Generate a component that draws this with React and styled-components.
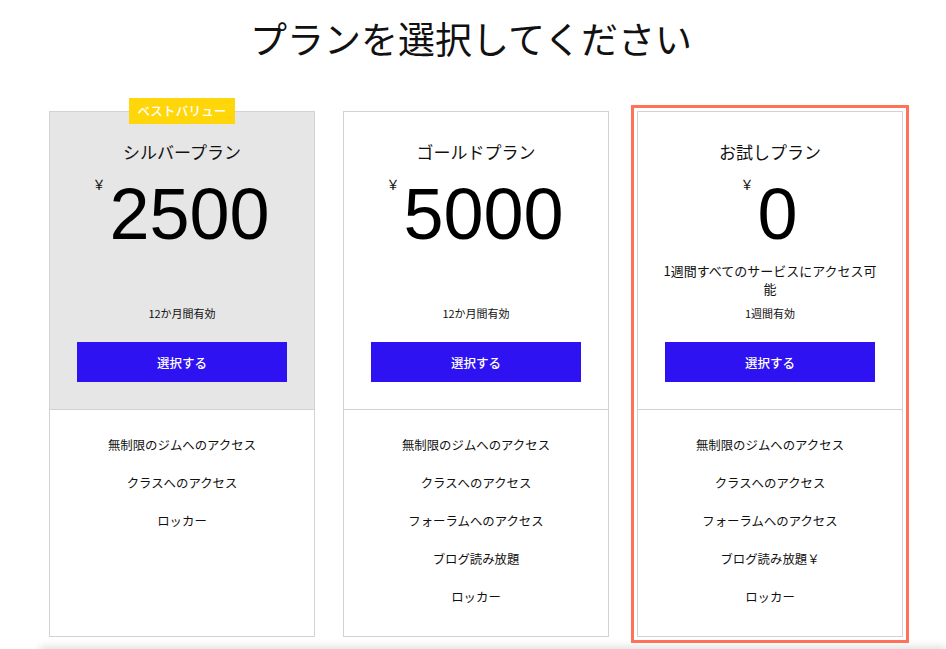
import React from "react";
import styled, { createGlobalStyle } from "styled-components";

const GlobalStyle = createGlobalStyle`
  html, body { margin: 0; padding: 0; background: #ffffff; }
  body {
    font-family: "Noto Sans CJK JP", "Noto Sans", sans-serif;
    color: #111111;
    overflow: hidden;
  }
`;

const Page = styled.div`
  width: 946px;
  height: 649px;
  overflow: hidden;
  display: flex;
  flex-direction: column;
  & > * { flex-shrink: 0; }
`;

const Title = styled.h1`
  margin: 16px 0 0;
  font-size: 37px;
  line-height: 44px;
  font-weight: 400;
  text-align: center;
  color: #111111;
  padding-right: 4px;
`;

const Cards = styled.div`
  display: flex;
  gap: 28px;
  padding: 0 43px 0 49px;
  margin-top: 51px;
  align-items: stretch;
`;

const Card = styled.div`
  position: relative;
  width: 266px;
  box-sizing: border-box;
  border: 1px solid #d2d2d2;
  display: flex;
  flex-direction: column;
  background: #ffffff;
  outline: ${(p) => (p.$selected ? "3px solid #ff7158" : "none")};
  outline-offset: 3px;
`;

const Badge = styled.div`
  position: absolute;
  top: -14px;
  left: 50%;
  transform: translateX(-50%);
  width: 106px;
  height: 26px;
  background: #ffd60a;
  color: #ffffff;
  font-size: 12.5px;
  line-height: 26px;
  text-align: center;
  font-weight: 500;
  letter-spacing: 0.2px;
`;

const Header = styled.div`
  height: 298px;
  box-sizing: border-box;
  padding: 28px 10px 27px;
  display: flex;
  flex-direction: column;
  align-items: center;
  background: ${(p) => (p.$shaded ? "#e6e6e6" : "#ffffff")};
  border-bottom: 1px solid #d2d2d2;
`;

const PlanName = styled.div`
  font-size: 17px;
  line-height: 24px;
  color: #111111;
`;

const Price = styled.div`
  margin-top: 14px;
  display: flex;
  align-items: flex-start;
  gap: 4px;
  padding-right: 2px;
`;

const Yen = styled.span`
  font-family: "Noto Sans CJK JP", sans-serif;
  font-size: 13px;
  line-height: 13px;
  margin-top: -1px;
`;

const Amount = styled.span`
  font-family: "Liberation Sans", Arial, sans-serif;
  font-size: 72px;
  line-height: 72px;
  color: #000000;
`;

const DescArea = styled.div`
  flex: 1;
  width: 221px;
  display: flex;
  flex-direction: column;
  justify-content: flex-end;
  padding-bottom: 6px;
`;

const Desc = styled.div`
  font-size: 13px;
  line-height: 18px;
  text-align: center;
  color: #111111;
`;

const Validity = styled.div`
  font-size: 11px;
  line-height: 18px;
  color: #111111;
`;

const SelectButton = styled.button`
  margin-top: 20px;
  width: 210px;
  height: 40px;
  border: none;
  background: #2e12f2;
  color: #ffffff;
  font-family: "Noto Sans CJK JP", sans-serif;
  font-size: 12.5px;
  font-weight: 500;
  cursor: pointer;
`;

const Features = styled.ul`
  list-style: none;
  margin: 0;
  padding: 26px 0 30px;
  display: flex;
  flex-direction: column;
  gap: 20px;
  flex: 1;
`;

const Feature = styled.li`
  font-size: 12.4px;
  line-height: 18px;
  text-align: center;
  color: #111111;
`;

const Footer = styled.div`
  margin-top: 13px;
  margin-left: 40px;
  height: 40px;
  background: #ffffff;
  box-shadow: 0 -3px 8px rgba(0, 0, 0, 0.14);
`;

const plans = [
  {
    name: "シルバープラン",
    price: "2500",
    validity: "12か月間有効",
    shaded: true,
    badge: "ベストバリュー",
    features: ["無制限のジムへのアクセス", "クラスへのアクセス", "ロッカー"],
  },
  {
    name: "ゴールドプラン",
    price: "5000",
    validity: "12か月間有効",
    features: [
      "無制限のジムへのアクセス",
      "クラスへのアクセス",
      "フォーラムへのアクセス",
      "ブログ読み放題",
      "ロッカー",
    ],
  },
  {
    name: "お試しプラン",
    price: "0",
    desc: "1週間すべてのサービスにアクセス可能",
    validity: "1週間有効",
    selected: true,
    features: [
      "無制限のジムへのアクセス",
      "クラスへのアクセス",
      "フォーラムへのアクセス",
      "ブログ読み放題￥",
      "ロッカー",
    ],
  },
];

export default function App() {
  return (
    <Page>
      <GlobalStyle />
      <Title>プランを選択してください</Title>
      <Cards>
        {plans.map((p) => (
          <Card key={p.name} $selected={p.selected}>
            {p.badge && <Badge>{p.badge}</Badge>}
            <Header $shaded={p.shaded}>
              <PlanName>{p.name}</PlanName>
              <Price>
                <Yen>￥</Yen>
                <Amount>{p.price}</Amount>
              </Price>
              <DescArea>{p.desc && <Desc>{p.desc}</Desc>}</DescArea>
              <Validity>{p.validity}</Validity>
              <SelectButton>選択する</SelectButton>
            </Header>
            <Features>
              {p.features.map((f) => (
                <Feature key={f}>{f}</Feature>
              ))}
            </Features>
          </Card>
        ))}
      </Cards>
      <Footer />
    </Page>
  );
}
